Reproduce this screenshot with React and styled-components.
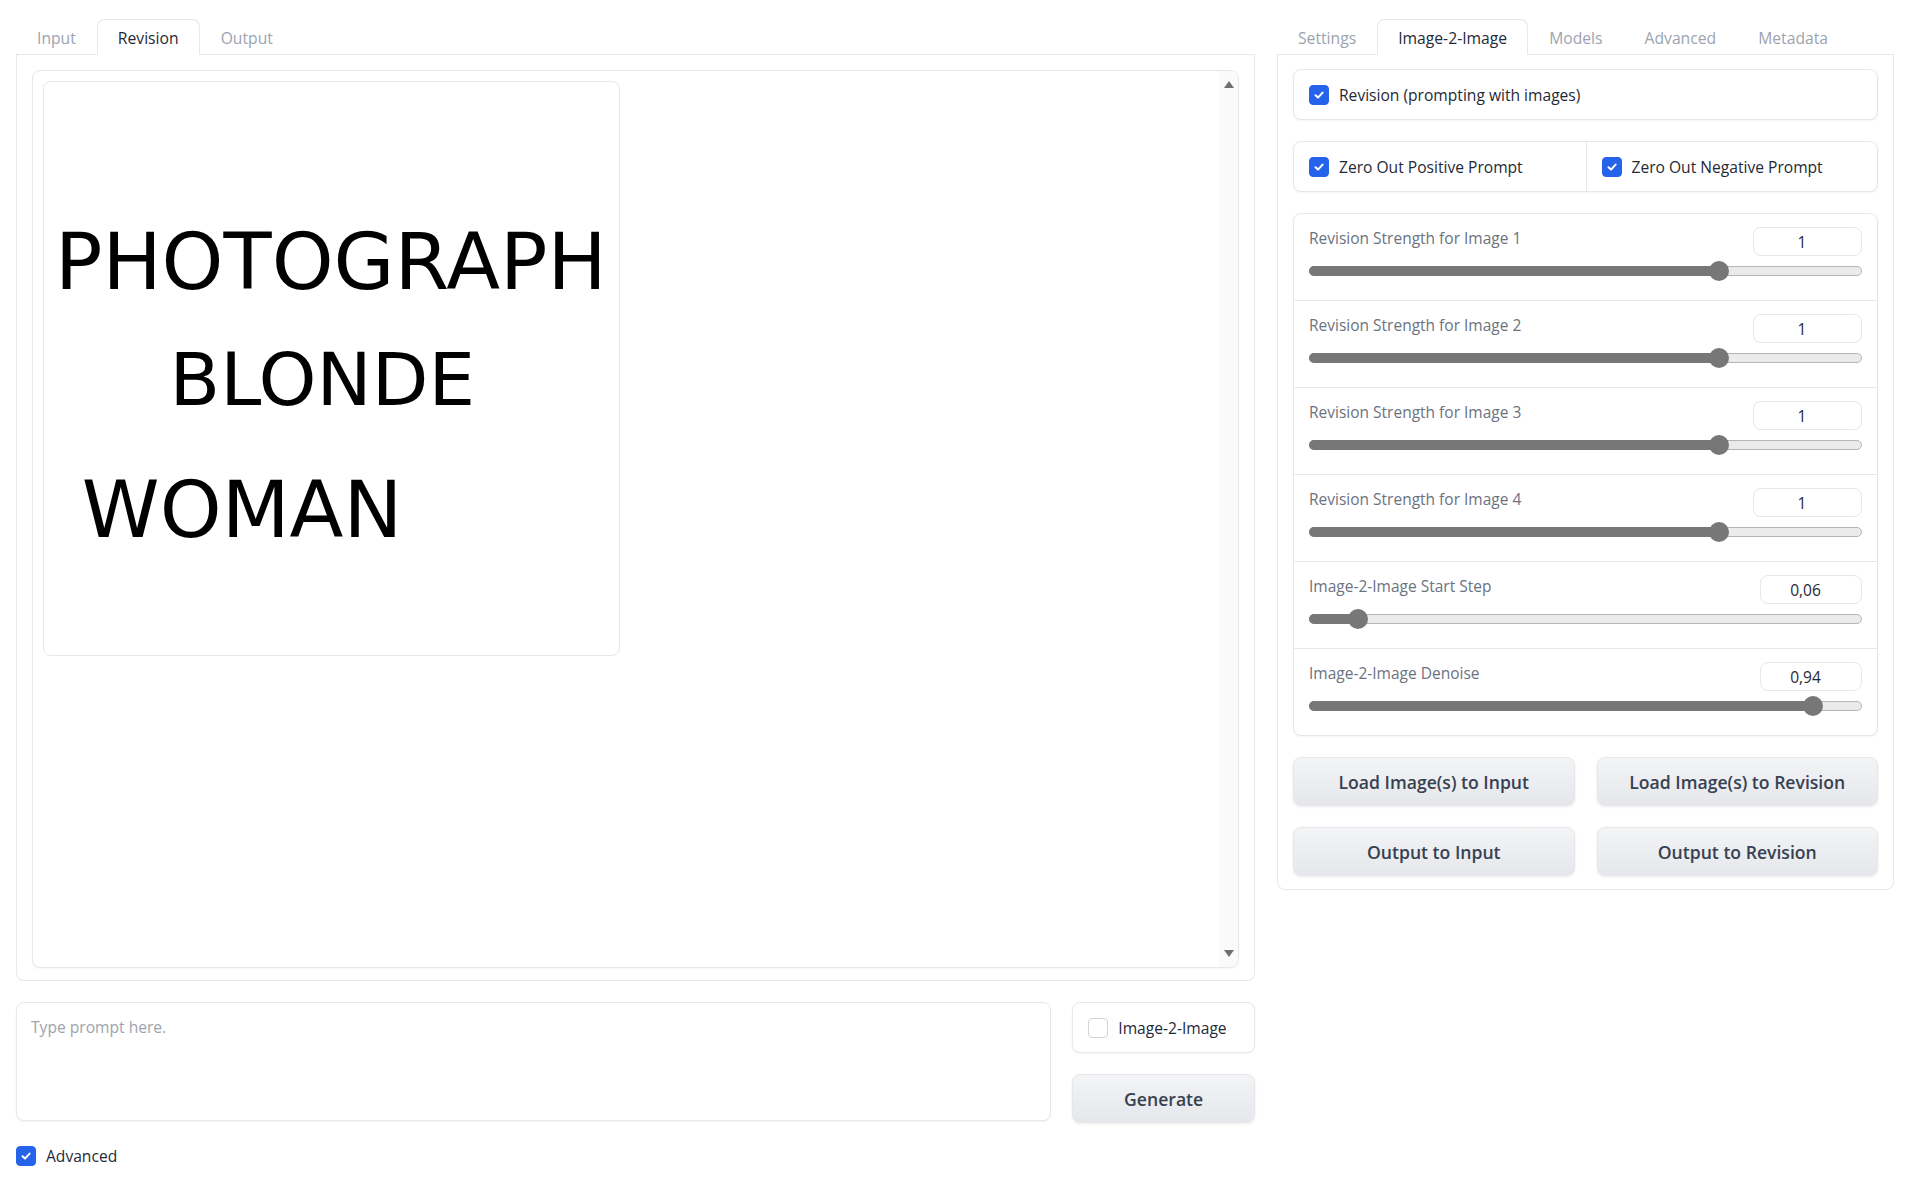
import React from 'react';
import styled, { createGlobalStyle } from 'styled-components';

const GlobalStyle = createGlobalStyle`
  html, body {
    margin: 0;
    padding: 0;
    background: #fff;
  }
  body {
    font-family: "Open Sans", "Noto Sans", sans-serif;
    font-size: 15.6px;
    color: #1f2937;
  }
  * {
    box-sizing: border-box;
  }
`;

const Page = styled.div`
  display: grid;
  grid-template-columns: 1239fr 617fr;
  gap: 22px;
  padding: 19px 20px 0 16px;
  align-items: start;
`;

const Column = styled.div`
  display: flex;
  flex-direction: column;
  min-width: 0;
`;

const TabNav = styled.div`
  display: flex;
  height: 36px;
  border-bottom: 1px solid #e5e7eb;
`;

const Tab = styled.div`
  height: 36px;
  padding: 1px 20px 0;
  margin-bottom: -1px;
  display: flex;
  align-items: center;
  font-size: 15.7px;
  color: ${(p) => (p.$active ? '#1f2937' : '#9ca3af')};
  background: ${(p) => (p.$active ? '#fff' : 'transparent')};
  border: 1px solid ${(p) => (p.$active ? '#e5e7eb' : 'transparent')};
  border-bottom-color: ${(p) => (p.$active ? '#fff' : 'transparent')};
  border-radius: 8px 8px 0 0;
`;

const TabPanel = styled.div`
  border: 1px solid #e5e7eb;
  border-top: none;
  border-radius: 0 0 8px 8px;
  padding: ${(p) => p.$pad};
  display: flex;
  flex-direction: column;
  gap: 21px;
`;

const Gallery = styled.div`
  height: 898px;
  border: 1px solid #e5e7eb;
  border-radius: 8px;
  display: flex;
  overflow: hidden;
  box-shadow: 0 1px 2px rgba(0, 0, 0, 0.04);
`;

const GalleryContent = styled.div`
  flex: 1;
  padding: 10px;
`;

const ImageCard = styled.div`
  width: 577px;
  height: 575px;
  border: 1px solid #e5e7eb;
  border-radius: 8px;
  background: #fff;
  overflow: hidden;
`;

const ScrollBar = styled.div`
  width: 19px;
  background: #fafafa;
  display: flex;
  flex-direction: column;
  justify-content: space-between;
  align-items: center;
  padding: 10px 0 10px 1px;
`;

const Arrow = ({ down }) => (
  <svg width="10" height="7" viewBox="0 0 10 7">
    <polygon points={down ? '0,0 10,0 5,7' : '0,7 10,7 5,0'} fill="#6f6f6f" />
  </svg>
);

const PromptRow = styled.div`
  display: grid;
  grid-template-columns: 17fr 3fr;
  gap: 21px;
  margin-top: 21px;
  align-items: start;
`;

const PromptBox = styled.textarea`
  height: 119px;
  resize: none;
  border: 1px solid #e5e7eb;
  border-radius: 8px;
  padding: 12px 14px;
  font-family: inherit;
  font-size: 15.6px;
  line-height: 24px;
  color: #1f2937;
  box-shadow: 0 1px 2px rgba(0, 0, 0, 0.05);
  outline: none;

  &::placeholder {
    color: #9ca3af;
  }
`;

const SideStack = styled.div`
  display: flex;
  flex-direction: column;
  gap: 21px;
`;

const Block = styled.div`
  border: 1px solid #e5e7eb;
  border-radius: 8px;
  background: #fff;
  box-shadow: 0 1px 2px rgba(0, 0, 0, 0.05);
`;

const CheckRow = styled.div`
  display: grid;
  grid-template-columns: repeat(${(p) => p.$cols || 1}, 1fr);
  border: 1px solid #e5e7eb;
  border-radius: 8px;
  background: #fff;
  box-shadow: 0 1px 2px rgba(0, 0, 0, 0.05);
`;

const CheckCell = styled.label`
  display: flex;
  align-items: center;
  gap: 10px;
  height: 49px;
  padding: 0 15px;
  font-size: 15.6px;
  color: #1f2937;
  border-left: ${(p) => (p.$divided ? '1px solid #e5e7eb' : 'none')};
`;

const Box = styled.span`
  width: 20px;
  height: 20px;
  flex: none;
  border-radius: 4px;
  display: flex;
  align-items: center;
  justify-content: center;
  background: ${(p) => (p.$checked ? '#2563eb' : '#fff')};
  border: 1px solid ${(p) => (p.$checked ? '#2563eb' : '#d1d5db')};
`;

const Check = ({ checked }) => (
  <Box $checked={checked}>
    {checked && (
      <svg width="12" height="12" viewBox="0 0 12 12">
        <polyline
          points="2.5,6.3 5,8.6 9.6,3.6"
          fill="none"
          stroke="#fff"
          strokeWidth="2"
          strokeLinecap="round"
          strokeLinejoin="round"
        />
      </svg>
    )}
  </Box>
);

const Button = styled.button`
  height: 49px;
  border: 1px solid #e5e7eb;
  border-radius: 8px;
  background: linear-gradient(to bottom, #f3f4f6, #e5e7eb);
  box-shadow: 0 1px 3px rgba(0, 0, 0, 0.08);
  font-family: inherit;
  font-size: 17.6px;
  font-weight: 600;
  color: #374151;
  cursor: pointer;
`;

const AdvancedRow = styled.label`
  display: flex;
  align-items: center;
  gap: 10px;
  margin-top: 22px;
  font-size: 15.6px;
  color: #1f2937;
`;

const SliderGroup = styled(Block)`
  display: flex;
  flex-direction: column;
`;

const SliderRow = styled.div`
  height: ${(p) => (p.$first ? 86 : 87)}px;
  padding: 13px 15px 0;
  border-top: ${(p) => (p.$first ? 'none' : '1px solid #e5e7eb')};
`;

const SliderHead = styled.div`
  display: flex;
  justify-content: space-between;
  align-items: flex-start;
  height: 29px;
`;

const SliderLabel = styled.span`
  font-size: 15.5px;
  line-height: 22px;
  color: #6b7280;
`;

const NumberBox = styled.div`
  width: ${(p) => p.$w}px;
  height: 29px;
  border: 1px solid #e5e7eb;
  border-radius: 8px;
  display: flex;
  align-items: center;
  justify-content: center;
  padding-right: 11px;
  font-size: 15.5px;
  color: #1f2937;
`;

const Track = styled.div`
  position: relative;
  height: 20px;
  margin-top: 5px;
`;

const Rail = styled.div`
  position: absolute;
  left: 0;
  right: 0;
  top: 5px;
  height: 10px;
  border-radius: 5px;
  background: #ebebeb;
  border: 1px solid #b5b5b5;
`;

const Fill = styled.div`
  position: absolute;
  left: 0;
  top: 5px;
  height: 10px;
  border-radius: 5px;
  background: #777;
`;

const Thumb = styled.div`
  position: absolute;
  top: 0;
  width: 20px;
  height: 20px;
  margin-left: -10px;
  border-radius: 50%;
  background: #777;
`;

const ButtonGrid = styled.div`
  display: grid;
  grid-template-columns: 1fr 1fr;
  gap: 21px 22px;
`;

const sliders = [
  { label: 'Revision Strength for Image 1', value: '1', pos: 0.742, w: 109 },
  { label: 'Revision Strength for Image 2', value: '1', pos: 0.742, w: 109 },
  { label: 'Revision Strength for Image 3', value: '1', pos: 0.742, w: 109 },
  { label: 'Revision Strength for Image 4', value: '1', pos: 0.742, w: 109 },
  { label: 'Image-2-Image Start Step', value: '0,06', pos: 0.088, w: 102 },
  { label: 'Image-2-Image Denoise', value: '0,94', pos: 0.911, w: 102 },
];

function Slider({ item, first }) {
  const pct = `${item.pos * 100}%`;
  return (
    <SliderRow $first={first}>
      <SliderHead>
        <SliderLabel>{item.label}</SliderLabel>
        <NumberBox $w={item.w}>{item.value}</NumberBox>
      </SliderHead>
      <Track>
        <Rail />
        <Fill style={{ width: pct }} />
        <Thumb style={{ left: pct }} />
      </Track>
    </SliderRow>
  );
}

function PromptPicture() {
  return (
    <svg width="100%" height="100%" viewBox="0 0 577 575">
      <g fontFamily="'DejaVu Sans', Verdana, sans-serif" fill="#000">
        <text x="11" y="208" fontSize="79">PHOTOGRAPH</text>
        <text x="126" y="324" fontSize="74">BLONDE</text>
        <text x="38" y="457" fontSize="79">WOMAN</text>
      </g>
    </svg>
  );
}

export default function App() {
  return (
    <>
      <GlobalStyle />
      <Page>
        <Column>
          <TabNav>
            <Tab>Input</Tab>
            <Tab $active>Revision</Tab>
            <Tab>Output</Tab>
          </TabNav>
          <TabPanel $pad="15px 15px 12px">
            <Gallery>
              <GalleryContent>
                <ImageCard>
                  <PromptPicture />
                </ImageCard>
              </GalleryContent>
              <ScrollBar>
                <Arrow />
                <Arrow down />
              </ScrollBar>
            </Gallery>
          </TabPanel>

          <PromptRow>
            <PromptBox placeholder="Type prompt here." />
            <SideStack>
              <CheckRow>
                <CheckCell>
                  <Check checked={false} />
                  Image-2-Image
                </CheckCell>
              </CheckRow>
              <Button>Generate</Button>
            </SideStack>
          </PromptRow>

          <AdvancedRow>
            <Check checked />
            Advanced
          </AdvancedRow>
        </Column>

        <Column>
          <TabNav>
            <Tab>Settings</Tab>
            <Tab $active>Image-2-Image</Tab>
            <Tab>Models</Tab>
            <Tab>Advanced</Tab>
            <Tab>Metadata</Tab>
          </TabNav>
          <TabPanel $pad="14px 15px 13px">
            <CheckRow>
              <CheckCell>
                <Check checked />
                Revision (prompting with images)
              </CheckCell>
            </CheckRow>
            <CheckRow $cols={2}>
              <CheckCell>
                <Check checked />
                Zero Out Positive Prompt
              </CheckCell>
              <CheckCell $divided>
                <Check checked />
                Zero Out Negative Prompt
              </CheckCell>
            </CheckRow>
            <SliderGroup>
              {sliders.map((item, i) => (
                <Slider key={i} item={item} first={i === 0} />
              ))}
            </SliderGroup>
            <ButtonGrid>
              <Button>Load Image(s) to Input</Button>
              <Button>Load Image(s) to Revision</Button>
              <Button>Output to Input</Button>
              <Button>Output to Revision</Button>
            </ButtonGrid>
          </TabPanel>
        </Column>
      </Page>
    </>
  );
}
